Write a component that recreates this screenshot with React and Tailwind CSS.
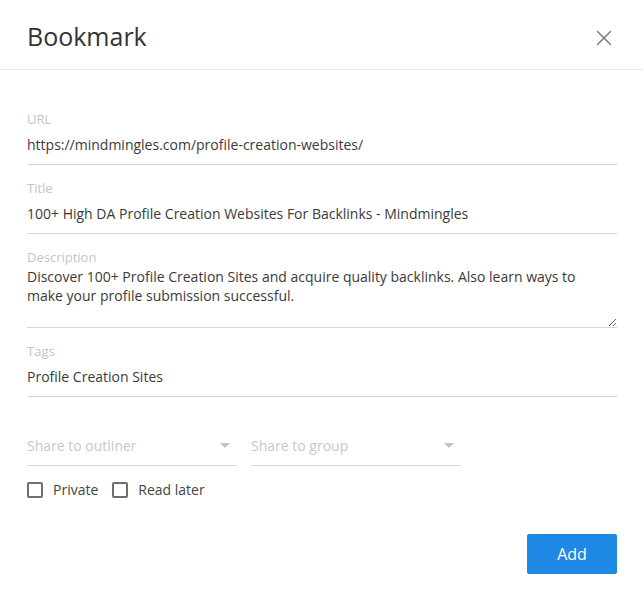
import { X } from "lucide-react";

const Field = ({ label, value }) => (
  <div className="mb-[14px]">
    <div className="h-[18px] text-[13px] leading-[18px] text-[#c4c4c4]">{label}</div>
    <div className="h-[37px] border-b border-[#d4d4d4] flex items-center pb-[4px] text-[14px] text-[#3a3a3a] whitespace-nowrap overflow-hidden">
      {value}
    </div>
  </div>
);

const Select = ({ placeholder }) => (
  <div className="w-[210px]">
    <div className="h-[18px]" />
    <div className="h-[37px] border-b border-[#d4d4d4] flex items-center justify-between pb-[4px] text-[14px] text-[#c8c8c8]">
      <span>{placeholder}</span>
      <span className="mr-[7px] w-0 h-0 border-l-[5px] border-r-[5px] border-t-[5px] border-l-transparent border-r-transparent border-t-[#c4c4c4]" />
    </div>
  </div>
);

const Check = ({ label }) => (
  <label className="flex items-center gap-[10px] text-[14px] leading-[18px] text-[#444]">
    <span className="w-[16px] h-[16px] border-2 border-[#6f6f6f] rounded-[2px]" />
    {label}
  </label>
);

export default function App() {
  return (
    <div className="w-[643px] h-[593px] bg-white font-['Open_Sans',sans-serif] overflow-hidden">
      <div className="h-[70px] border-b border-[#e6e6e6] flex items-center justify-between pl-[27px] pr-[26px]">
        <h1 className="text-[25px] text-[#333] pt-[4px]">Bookmark</h1>
        <X size={26} strokeWidth={1.3} className="text-[#777] mt-[6px]" />
      </div>

      <div className="pt-[40px] pl-[27px] pr-[26px]">
        <Field label="URL" value="https://mindmingles.com/profile-creation-websites/" />
        <Field label="Title" value="100+ High DA Profile Creation Websites For Backlinks - Mindmingles" />

        <div className="mb-[14px]">
          <div className="h-[18px] text-[13px] leading-[18px] text-[#c4c4c4]">Description</div>
          <textarea
            readOnly
            defaultValue="Discover 100+ Profile Creation Sites and acquire quality backlinks. Also learn ways to make your profile submission successful."
            className="block w-full h-[62px] border-0 border-b border-[#d4d4d4] pt-[1px] pr-[30px] text-[14px] leading-[19px] text-[#3a3a3a] outline-none resize-y"
          />
        </div>

        <Field label="Tags" value="Profile Creation Sites" />

        <div className="flex gap-[14px]">
          <Select placeholder="Share to outliner" />
          <Select placeholder="Share to group" />
        </div>

        <div className="mt-[15px] flex items-center gap-[14px]">
          <Check label="Private" />
          <Check label="Read later" />
        </div>

        <div className="mt-[35px] flex justify-end">
          <button className="w-[90px] h-[40px] rounded-[2px] bg-[#1e88e5] text-white text-[16px]">Add</button>
        </div>
      </div>
    </div>
  );
}
